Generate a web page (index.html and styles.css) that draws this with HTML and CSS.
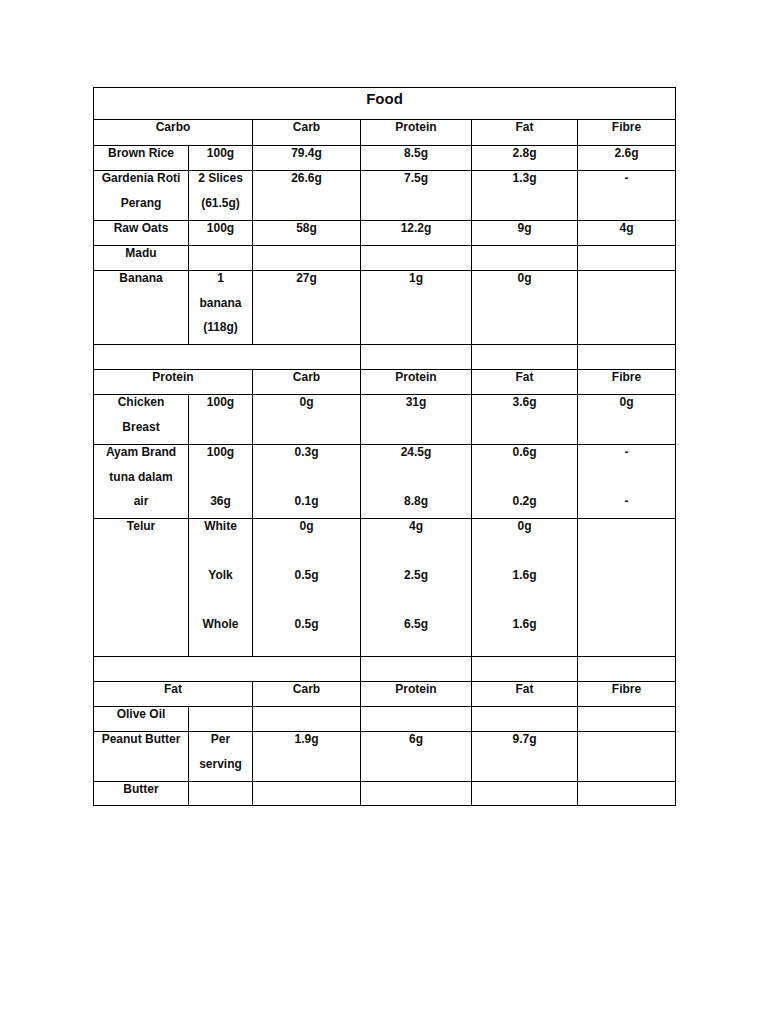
FILE: index.html
```html
<!DOCTYPE html>
<html>
<head>
<meta charset="utf-8">
<link rel="stylesheet" href="styles.css">
</head>
<body>
<table class="food">
<colgroup>
<col class="c1"><col class="c2"><col class="c3"><col class="c4"><col class="c5"><col class="c6">
</colgroup>
<tr class="h32"><td colspan="6" class="title"><div class="tln">Food</div></td></tr>

<tr class="h26"><td colspan="2"><div class="ln">Carbo</div></td><td><div class="ln">Carb</div></td><td><div class="ln">Protein</div></td><td><div class="ln">Fat</div></td><td><div class="ln">Fibre</div></td></tr>
<tr class="h25"><td><div class="ln">Brown Rice</div></td><td><div class="ln">100g</div></td><td><div class="ln">79.4g</div></td><td><div class="ln">8.5g</div></td><td><div class="ln">2.8g</div></td><td><div class="ln">2.6g</div></td></tr>
<tr class="h50"><td><div class="ln">Gardenia Roti</div><div class="ln">Perang</div></td><td><div class="ln">2 Slices</div><div class="ln">(61.5g)</div></td><td><div class="ln">26.6g</div></td><td><div class="ln">7.5g</div></td><td><div class="ln">1.3g</div></td><td><div class="ln">-</div></td></tr>
<tr class="h25"><td><div class="ln">Raw Oats</div></td><td><div class="ln">100g</div></td><td><div class="ln">58g</div></td><td><div class="ln">12.2g</div></td><td><div class="ln">9g</div></td><td><div class="ln">4g</div></td></tr>
<tr class="h25"><td><div class="ln">Madu</div></td><td></td><td></td><td></td><td></td><td></td></tr>
<tr class="h74"><td><div class="ln">Banana</div></td><td><div class="ln">1</div><div class="ln">banana</div><div class="ln">(118g)</div></td><td><div class="ln">27g</div></td><td><div class="ln">1g</div></td><td><div class="ln">0g</div></td><td></td></tr>
<tr class="h25"><td colspan="3"></td><td></td><td></td><td></td></tr>

<tr class="h25"><td colspan="2"><div class="ln">Protein</div></td><td><div class="ln">Carb</div></td><td><div class="ln">Protein</div></td><td><div class="ln">Fat</div></td><td><div class="ln">Fibre</div></td></tr>
<tr class="h50"><td><div class="ln">Chicken</div><div class="ln">Breast</div></td><td><div class="ln">100g</div></td><td><div class="ln">0g</div></td><td><div class="ln">31g</div></td><td><div class="ln">3.6g</div></td><td><div class="ln">0g</div></td></tr>
<tr class="h74"><td><div class="ln">Ayam Brand</div><div class="ln">tuna dalam</div><div class="ln">air</div></td><td><div class="ln">100g</div><div class="ln"></div><div class="ln">36g</div></td><td><div class="ln">0.3g</div><div class="ln"></div><div class="ln">0.1g</div></td><td><div class="ln">24.5g</div><div class="ln"></div><div class="ln">8.8g</div></td><td><div class="ln">0.6g</div><div class="ln"></div><div class="ln">0.2g</div></td><td><div class="ln">-</div><div class="ln"></div><div class="ln">-</div></td></tr>
<tr class="h138"><td><div class="ln">Telur</div></td><td><div class="ln">White</div><div class="ln"></div><div class="ln">Yolk</div><div class="ln"></div><div class="ln">Whole</div></td><td><div class="ln">0g</div><div class="ln"></div><div class="ln">0.5g</div><div class="ln"></div><div class="ln">0.5g</div></td><td><div class="ln">4g</div><div class="ln"></div><div class="ln">2.5g</div><div class="ln"></div><div class="ln">6.5g</div></td><td><div class="ln">0g</div><div class="ln"></div><div class="ln">1.6g</div><div class="ln"></div><div class="ln">1.6g</div></td><td></td></tr>
<tr class="h25"><td colspan="3"></td><td></td><td></td><td></td></tr>

<tr class="h25"><td colspan="2"><div class="ln">Fat</div></td><td><div class="ln">Carb</div></td><td><div class="ln">Protein</div></td><td><div class="ln">Fat</div></td><td><div class="ln">Fibre</div></td></tr>
<tr class="h25"><td><div class="ln">Olive Oil</div></td><td></td><td></td><td></td><td></td><td></td></tr>
<tr class="h50"><td><div class="ln">Peanut Butter</div></td><td><div class="ln">Per</div><div class="ln">serving</div></td><td><div class="ln">1.9g</div></td><td><div class="ln">6g</div></td><td><div class="ln">9.7g</div></td><td></td></tr>
<tr class="h24"><td><div class="ln">Butter</div></td><td></td><td></td><td></td><td></td><td></td></tr>
</table>
</body>
</html>
```

FILE: styles.css
```css
html, body {
  margin: 0;
  padding: 0;
  background: #ffffff;
}

body {
  font-family: "Liberation Sans", Arial, sans-serif;
  font-weight: bold;
  font-size: 12px;
  color: #111111;
}

.food {
  margin: 87px 0 0 93px;
  border-collapse: collapse;
  table-layout: fixed;
  width: 582px;
}

.c1 { width: 95px; }
.c2 { width: 64px; }
.c3 { width: 108px; }
.c4 { width: 111px; }
.c5 { width: 106px; }
.c6 { width: 98px; }

.food td {
  border: 1px solid #000000;
  padding: 0;
  vertical-align: top;
  text-align: center;
  white-space: nowrap;
  overflow: hidden;
}

.ln {
  height: 24.5px;
  line-height: 14px;
}

.ln:last-child {
  height: 14px;
}

.title .tln {
  font-size: 15px;
  line-height: 20px;
  padding-top: 1px;
}

.h32 { height: 32px; }
.h26 { height: 26px; }
.h25 { height: 25px; }
.h24 { height: 24px; }
.h50 { height: 50px; }
.h74 { height: 74px; }
.h138 { height: 138px; }
```
